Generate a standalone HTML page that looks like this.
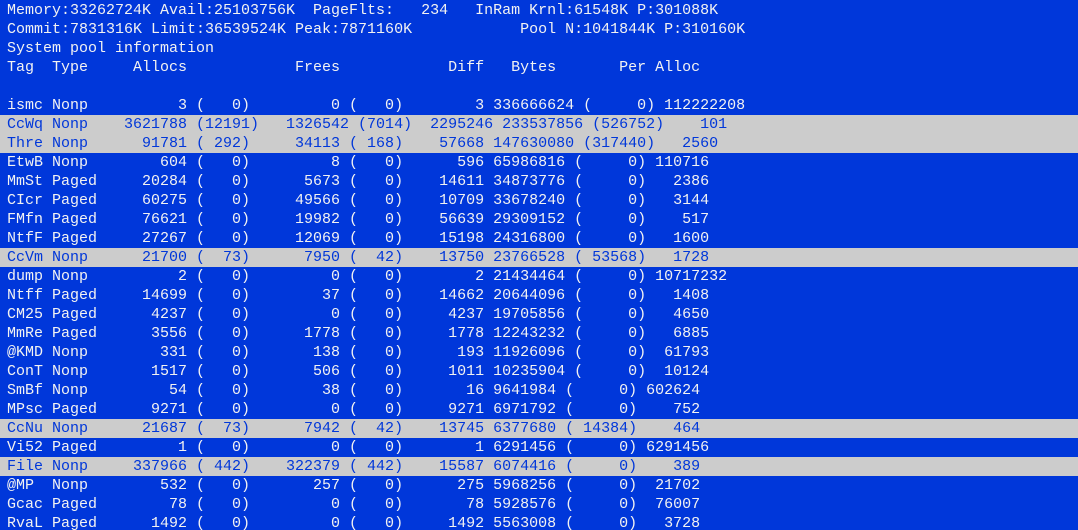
<!DOCTYPE html>
<html><head><meta charset="utf-8"><style>
html,body{margin:0;padding:0;background:#0037DA;width:1078px;height:530px;overflow:hidden}
pre{margin:0;padding:1px 0 0 7px;font-family:"Liberation Mono","DejaVu Sans Mono",monospace;font-size:15px;line-height:19px;color:#F2F2F2}
.l{display:block;height:19px}
.g{background:#CCCCCC;color:#0037DA;margin-left:-7px;padding-left:7px}
</style></head><body><pre><span class="l">Memory:33262724K Avail:25103756K  PageFlts:   234   InRam Krnl:61548K P:301088K</span><span class="l">Commit:7831316K Limit:36539524K Peak:7871160K            Pool N:1041844K P:310160K</span><span class="l">System pool information</span><span class="l">Tag  Type     Allocs            Frees            Diff   Bytes       Per Alloc</span><span class="l"> </span><span class="l">ismc Nonp          3 (   0)         0 (   0)        3 336666624 (     0) 112222208</span><span class="l g">CcWq Nonp    3621788 (12191)   1326542 (7014)  2295246 233537856 (526752)    101</span><span class="l g">Thre Nonp      91781 ( 292)     34113 ( 168)    57668 147630080 (317440)   2560</span><span class="l">EtwB Nonp        604 (   0)         8 (   0)      596 65986816 (     0) 110716</span><span class="l">MmSt Paged     20284 (   0)      5673 (   0)    14611 34873776 (     0)   2386</span><span class="l">CIcr Paged     60275 (   0)     49566 (   0)    10709 33678240 (     0)   3144</span><span class="l">FMfn Paged     76621 (   0)     19982 (   0)    56639 29309152 (     0)    517</span><span class="l">NtfF Paged     27267 (   0)     12069 (   0)    15198 24316800 (     0)   1600</span><span class="l g">CcVm Nonp      21700 (  73)      7950 (  42)    13750 23766528 ( 53568)   1728</span><span class="l">dump Nonp          2 (   0)         0 (   0)        2 21434464 (     0) 10717232</span><span class="l">Ntff Paged     14699 (   0)        37 (   0)    14662 20644096 (     0)   1408</span><span class="l">CM25 Paged      4237 (   0)         0 (   0)     4237 19705856 (     0)   4650</span><span class="l">MmRe Paged      3556 (   0)      1778 (   0)     1778 12243232 (     0)   6885</span><span class="l">@KMD Nonp        331 (   0)       138 (   0)      193 11926096 (     0)  61793</span><span class="l">ConT Nonp       1517 (   0)       506 (   0)     1011 10235904 (     0)  10124</span><span class="l">SmBf Nonp         54 (   0)        38 (   0)       16 9641984 (     0) 602624</span><span class="l">MPsc Paged      9271 (   0)         0 (   0)     9271 6971792 (     0)    752</span><span class="l g">CcNu Nonp      21687 (  73)      7942 (  42)    13745 6377680 ( 14384)    464</span><span class="l">Vi52 Paged         1 (   0)         0 (   0)        1 6291456 (     0) 6291456</span><span class="l g">File Nonp     337966 ( 442)    322379 ( 442)    15587 6074416 (     0)    389</span><span class="l">@MP  Nonp        532 (   0)       257 (   0)      275 5968256 (     0)  21702</span><span class="l">Gcac Paged        78 (   0)         0 (   0)       78 5928576 (     0)  76007</span><span class="l">RvaL Paged      1492 (   0)         0 (   0)     1492 5563008 (     0)   3728</span></pre></body></html>
